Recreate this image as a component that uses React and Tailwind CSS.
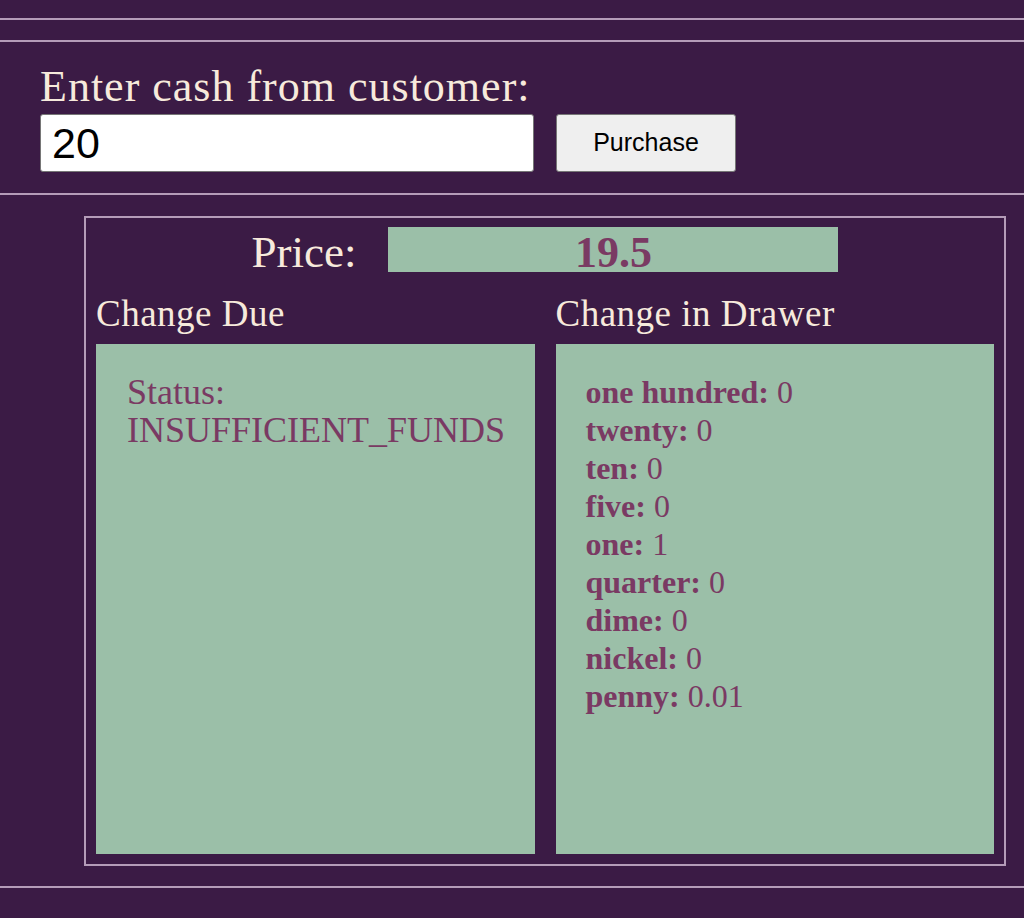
import React, { useState } from "react";

const drawer = [
  ["one hundred", "0"],
  ["twenty", "0"],
  ["ten", "0"],
  ["five", "0"],
  ["one", "1"],
  ["quarter", "0"],
  ["dime", "0"],
  ["nickel", "0"],
  ["penny", "0.01"],
];

export default function App() {
  const [cash, setCash] = useState("20");

  return (
    <div className="min-h-[918px] bg-[#3b1b45] pt-[18px] font-['Liberation_Serif',serif] text-[#f7eadc]">
      <div className="h-[2px] bg-[#b49cb8]"></div>
      <div className="mt-[20px] h-[2px] bg-[#b49cb8]"></div>

      <div className="px-[40px] pt-[23px]">
        <label htmlFor="cash" className="block text-[44px] leading-none tracking-[1px]">
          Enter cash from customer:
        </label>
        <div className="mt-[5px] flex gap-[22px]">
          <input
            id="cash"
            value={cash}
            onChange={(e) => setCash(e.target.value)}
            className="h-[58px] w-[494px] rounded-[3px] border border-[#767676] bg-white pl-[11px] font-['Liberation_Sans',Arial,sans-serif] text-[43px] text-black outline-none"
          />
          <button className="h-[58px] w-[180px] rounded-[3px] border border-[#767676] bg-[#efefef] font-['Liberation_Sans',Arial,sans-serif] text-[25px] text-black">
            Purchase
          </button>
        </div>
      </div>

      <div className="mt-[21px] h-[2px] bg-[#b49cb8]"></div>

      <div className="mt-[21px] ml-[84px] w-[922px] border-2 border-[#b49cb8] px-[10px] pt-[9px] pb-[10px]">
        <div className="flex items-start justify-center gap-[32px]">
          <span className="h-[45px] text-[45px] leading-[51px]">Price:</span>
          <div className="h-[45px] w-[450px] bg-[#9bbfa8] text-center text-[44px] font-bold leading-[51px] text-[#7a3a63]">
            19.5
          </div>
        </div>

        <div className="mt-[23px] grid grid-cols-2 gap-x-[21px]">
          <h2 className="text-[37px] leading-none tracking-[0.5px]">Change Due</h2>
          <h2 className="text-[37px] leading-none tracking-[0.5px]">Change in Drawer</h2>
        </div>

        <div className="mt-[12px] grid grid-cols-2 gap-x-[21px]">
          <div className="h-[510px] bg-[#9bbfa8] pl-[31px] pt-[29px] text-[36px] leading-[38px] text-[#7a3a63]">
            <p>Status:</p>
            <p>INSUFFICIENT_FUNDS</p>
          </div>
          <div className="h-[510px] bg-[#9bbfa8] pl-[30px] pt-[29px] text-[32px] leading-[38px] text-[#7a3a63]">
            {drawer.map(([name, amount]) => (
              <p key={name}>
                <strong>{name}:</strong> {amount}
              </p>
            ))}
          </div>
        </div>
      </div>

      <div className="mt-[20px] h-[2px] bg-[#b49cb8]"></div>
    </div>
  );
}
